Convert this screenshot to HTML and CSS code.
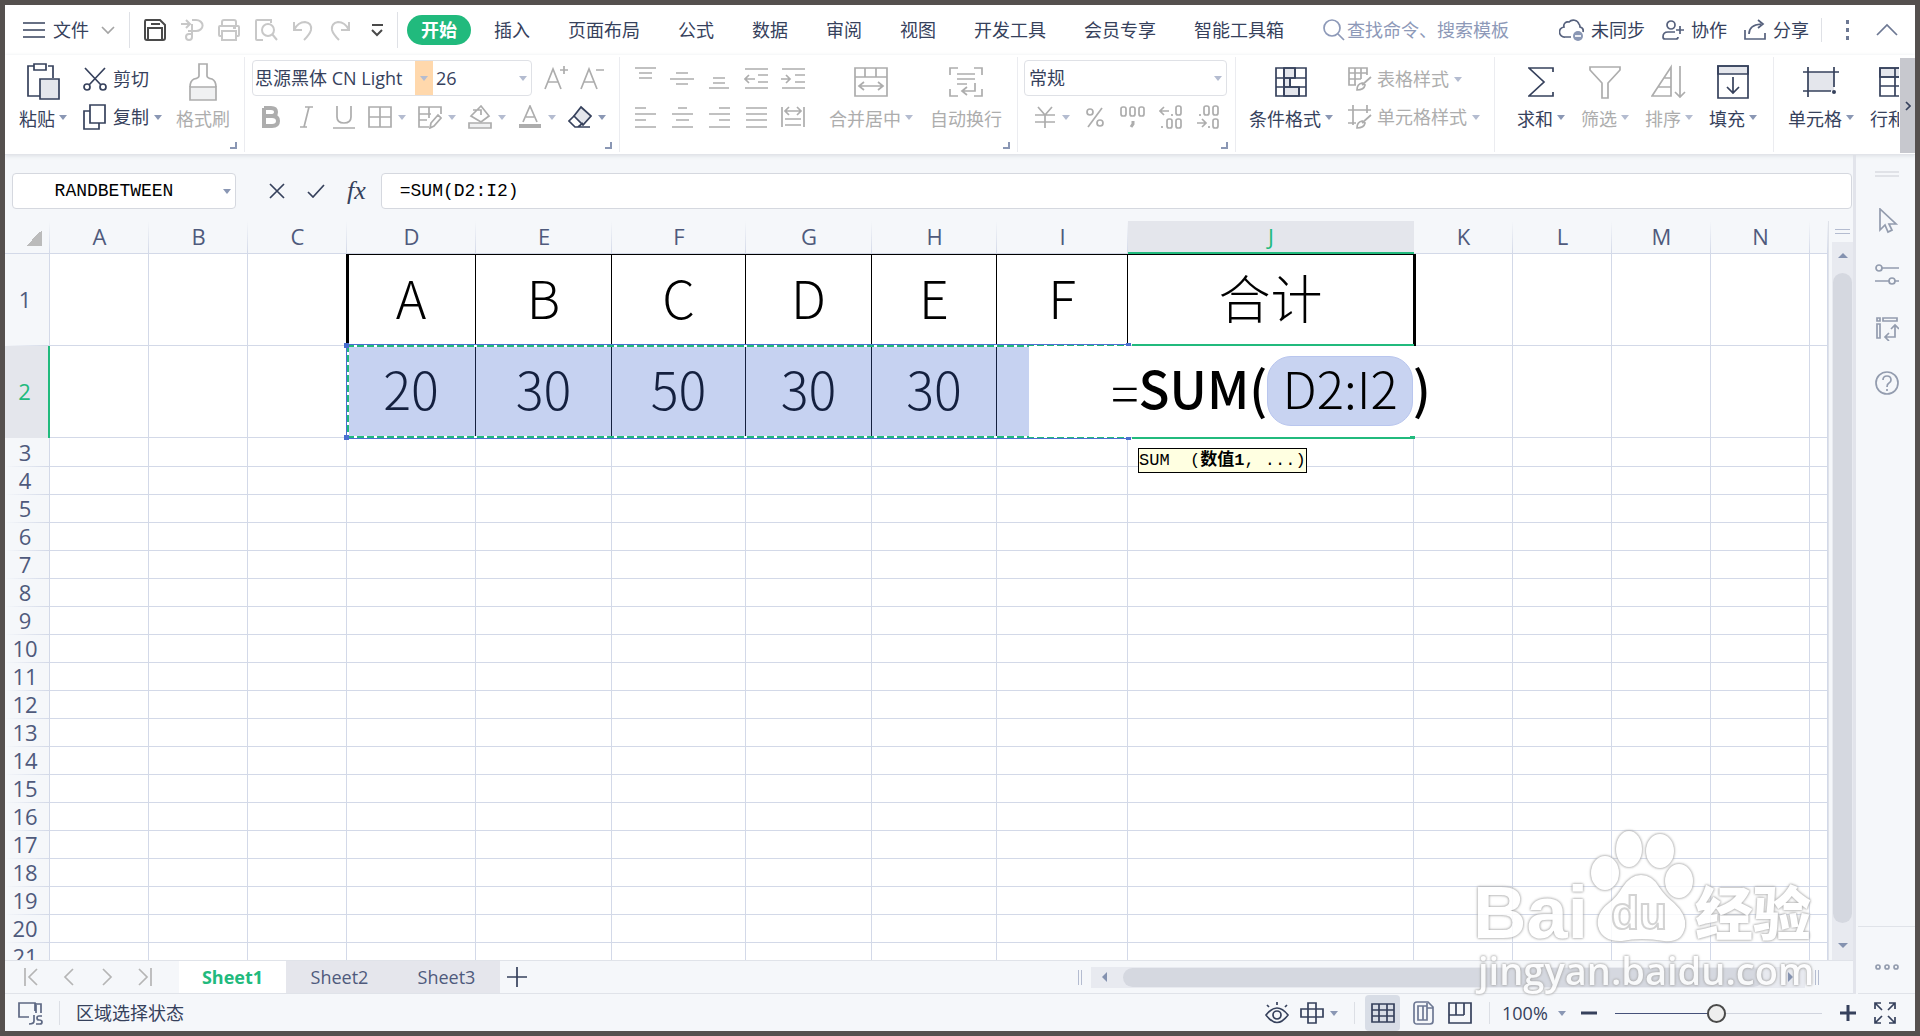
FILE: index.html
```html
<!DOCTYPE html>
<html lang="zh-CN">
  <head>
    <meta charset="utf-8">
    <title>Sheet1</title>
    <link rel="stylesheet" href="styles.css">
  </head>
  <body>
    <header class="menu">
      <button class="file-btn">
        <svg width="22" height="20" viewBox="0 0 22 20"><path d="M0 3h22M0 10h22M0 17h22"/></svg>
        <span>文件</span>
        <svg class="grey" width="14" height="10" viewBox="0 0 14 10"><path d="M1 2l6 6 6-6"/></svg>
      </button>
      <div class="quick">
        <button aria-label="保存"><svg class="black" width="24" height="24" viewBox="0 0 24 24"><path d="M3 2h14l5 5v13q0 2-2 2H4q-2 0-2-2V4q0-2 1-2zM5 22V10h14v12M8 6h9" stroke-width="2"/></svg></button>
        <button aria-label="输出为PDF"><svg class="faint" width="24" height="24" viewBox="0 0 24 24"><path d="M1 6h8M6 2l4 4-4 4M12 2h4a6 5 0 0 1 0 11H8M12 6v13a3 3 0 1 1-3-3h4" stroke-width="2"/></svg></button>
        <button aria-label="打印"><svg class="faint" width="24" height="24" viewBox="0 0 24 24"><path d="M5 8V4q0-2 2-2h10q2 0 2 2v4M5 18H3q-1 0-1-1V9q0-1 1-1h18q1 0 1 1v8q0 1-1 1h-2M5 13h14v9H5zM16 10h3" stroke-width="2"/></svg></button>
        <button aria-label="打印预览"><svg class="faint" width="24" height="24" viewBox="0 0 24 24"><path d="M9 22H3q-1 0-1-1V3q0-1 1-1h15M18 16l5 6M17 2v3" stroke-width="2"/><circle cx="14" cy="12" r="6" stroke-width="2"/></svg></button>
        <button aria-label="撤销"><svg class="faint" width="24" height="24" viewBox="0 0 24 24"><path d="M3 4v8h8M3 12q4-8 11-8 7 1 6 8-1 4-7 10" stroke-width="2"/></svg></button>
        <button aria-label="恢复"><svg class="faint" width="24" height="24" viewBox="0 0 24 24"><path d="M21 4v8h-8M21 12q-4-8-11-8-7 1-6 8 1 4 7 10" stroke-width="2"/></svg></button>
        <button aria-label="更多"><svg class="black" width="24" height="24" viewBox="0 0 24 24"><path d="M7 7h11M7 12l5 5 5-5" stroke-width="2"/></svg></button>
      </div>
      <nav class="tabs">
        <a class="active" href="#">开始</a>
        <a href="#">插入</a>
        <a href="#">页面布局</a>
        <a href="#">公式</a>
        <a href="#">数据</a>
        <a href="#">审阅</a>
        <a href="#">视图</a>
        <a href="#">开发工具</a>
        <a href="#">会员专享</a>
        <a href="#">智能工具箱</a>
      </nav>
      <label class="search">
        <svg width="22" height="22" viewBox="0 0 22 22"><circle cx="9" cy="9" r="8"/><path d="M15 15l6 6"/></svg>
        <input type="text" placeholder="查找命令、搜索模板" aria-label="查找命令、搜索模板">
      </label>
      <div class="account">
        <button><svg width="26" height="24" viewBox="0 0 26 24"><path d="M12 19H6a5 5 0 0 1-1-10 4 4 0 0 1 5-5 6 6 0 0 1 10 2q1 1 1 3 4 1 3 5"/><circle class="dot" cx="19" cy="18" r="5"/><path class="dash" d="M16 18h6"/></svg>未同步</button>
        <button><svg width="24" height="24" viewBox="0 0 24 24"><circle cx="10" cy="7" r="4"/><path d="M14 14H7q-5 0-5 5 0 2 2 2h11q2 0 2-2M19 8v8M15 12h8"/></svg>协作</button>
        <button><svg width="24" height="24" viewBox="0 0 24 24"><path d="M2 12v9h20v-6M6 16q0-9 12-10M15 2l5 4-5 4"/></svg>分享</button>
      </div>
      <button class="more" aria-label="更多"><svg width="4" height="20" viewBox="0 0 4 20"><path class="solid" d="M0 0h3v4H0zM0 8h3v4H0zM0 16h3v4H0z"/></svg></button>
      <button class="fold" aria-label="收起功能区"><svg width="22" height="14" viewBox="0 0 22 14"><path d="M1 12L11 2l10 10"/></svg></button>
    </header>

    <section class="ribbon">
      <div class="group clipboard">
        <button class="big">
          <svg width="34" height="38" viewBox="0 0 34 38"><path d="M8 3H2v30h12M22 3h5v12M8 1h12v6H8z"/><path class="tint" d="M14 16h19v20H14z"/></svg>
          <span>粘贴<i class="caret"></i></span>
        </button>
        <div class="stack">
          <button class="small"><svg width="26" height="24" viewBox="0 0 26 24"><path d="M3 1l16 17M23 1L7 18"/><circle cx="5" cy="20" r="3"/><circle cx="21" cy="20" r="3"/></svg>剪切</button>
          <button class="small"><svg width="26" height="26" viewBox="0 0 26 26"><path d="M8 1h15v18H8zM8 7H2v18h15v-6"/></svg>复制<i class="caret"></i></button>
        </div>
        <button class="big off">
          <svg width="30" height="38" viewBox="0 0 30 38"><path class="tint" d="M2 24h26v13H2z"/><path d="M2 24q0-6 4-8 5-1 5-3V1h8v12q0 2 5 3 4 2 4 8"/></svg>
          <span>格式刷</span>
        </button>
        <i class="corner"></i>
      </div>

      <div class="group font">
        <div class="stack">
          <div class="line">
            <div class="combo">
              <select class="font-name" aria-label="字体"><option>思源黑体 CN Light</option></select>
              <i class="hot"><i class="caret"></i></i>
              <select class="font-size" aria-label="字号"><option>26</option></select>
              <i class="caret"></i>
            </div>
            <button class="off" aria-label="增大字号"><svg width="24" height="24" viewBox="0 0 24 24"><path d="M1 23L9 3l8 20M4 16h10M16 4h8M20 0v8"/></svg></button>
            <button class="off" aria-label="减小字号"><svg width="24" height="24" viewBox="0 0 24 24"><path d="M1 23L9 3l8 20M4 16h10M16 4h8"/></svg></button>
          </div>
          <div class="line tools">
            <button class="off" aria-label="加粗"><svg width="24" height="24" viewBox="0 0 24 24"><path d="M4 3v18h8q6 0 6-5t-6-5H4M4 3h7q5 0 5 4t-5 4" stroke-width="4"/></svg></button>
            <button class="off" aria-label="倾斜"><svg width="24" height="24" viewBox="0 0 24 24"><path d="M9 2h8M4 22h7M13 2L8 22"/></svg></button>
            <button class="off" aria-label="下划线"><svg width="24" height="24" viewBox="0 0 24 24"><path d="M5 1v11q0 6 7 6t7-6V1M1 23h22"/></svg></button>
            <button class="off" aria-label="边框"><svg width="24" height="24" viewBox="0 0 24 24"><path d="M1 2h22v20H1zM12 2v20M1 12h22"/></svg><i class="caret"></i></button>
            <button class="off" aria-label="绘制边框"><svg width="24" height="24" viewBox="0 0 24 24"><path d="M23 9V2H1v20h10M1 9h12M11 2v11M1 15h8M13 18l7-8 3 3-7 8-4 2z"/></svg><i class="caret"></i></button>
            <button class="off" aria-label="填充颜色"><svg width="24" height="24" viewBox="0 0 24 24"><path d="M5 5h8v5M13 1L3 11l10 6 8-6z"/><path class="tint" d="M1 18h22v5H1z"/></svg><i class="caret"></i></button>
            <button class="off" aria-label="字体颜色"><svg width="24" height="24" viewBox="0 0 24 24"><path d="M5 17L12 1l7 16M8 12h8"/><path class="solid" d="M1 19h22v4H1z"/></svg><i class="caret"></i></button>
            <button aria-label="清除"><svg width="24" height="24" viewBox="0 0 24 24"><path class="tint" d="M13 2l10 9-8 9-9-9z"/><path d="M6 11l-5 5 6 6h15M10 22l5-4"/></svg><i class="caret"></i></button>
          </div>
        </div>
        <i class="corner"></i>
      </div>

      <div class="group align">
        <div class="stack">
          <div class="line wide">
            <button class="off" aria-label="顶端对齐"><svg width="24" height="24" viewBox="0 0 24 24"><path d="M2 1h21M6 6h13M6 11h13"/></svg></button>
            <button class="off" aria-label="垂直居中"><svg width="24" height="24" viewBox="0 0 24 24"><path d="M6 6h12M0 12h24M6 17h12"/></svg></button>
            <button class="off" aria-label="底端对齐"><svg width="24" height="24" viewBox="0 0 24 24"><path d="M6 11h12M6 16h12M2 21h20"/></svg></button>
            <button class="off" aria-label="减少缩进"><svg width="24" height="24" viewBox="0 0 24 24"><path d="M1 2h23M14 8h10M14 15h10M1 21h23M1 12h10M5 8l-4 4 4 4"/></svg></button>
            <button class="off" aria-label="增加缩进"><svg width="24" height="24" viewBox="0 0 24 24"><path d="M1 2h23M14 8h10M14 15h10M1 21h23M0 12h9M5 8l4 4-4 4"/></svg></button>
          </div>
          <div class="line wide">
            <button class="off" aria-label="左对齐"><svg width="24" height="24" viewBox="0 0 24 24"><path d="M2 3h11M2 9h21M2 15h11M2 22h21"/></svg></button>
            <button class="off" aria-label="水平居中"><svg width="24" height="24" viewBox="0 0 24 24"><path d="M8 3h9M2 9h21M6 15h13M2 22h21"/></svg></button>
            <button class="off" aria-label="右对齐"><svg width="24" height="24" viewBox="0 0 24 24"><path d="M12 3h11M2 9h21M12 15h11M2 22h21"/></svg></button>
            <button class="off" aria-label="两端对齐"><svg width="24" height="24" viewBox="0 0 24 24"><path d="M2 3h21M2 9h21M2 15h21M2 22h21"/></svg></button>
            <button class="off" aria-label="分散对齐"><svg width="24" height="24" viewBox="0 0 24 24"><path d="M1 2v20M23 2v20M4 14h16M4 20h16M4 6h16M8 2L4 6l4 4M16 2l4 4-4 4"/></svg></button>
          </div>
        </div>
        <button class="big off">
          <svg width="34" height="30" viewBox="0 0 34 30"><path d="M1 1h32v28H1zM1 10h32M11 1v9M22 1v9M6 19h22M10 15l-5 4 5 4M24 15l5 4-5 4"/></svg>
          <span>合并居中<i class="caret"></i></span>
        </button>
        <button class="big off">
          <svg width="34" height="30" viewBox="0 0 34 30"><path d="M1 8V1h8M25 1h8v7M1 22v7h8M25 29h8v-7M8 7h18M8 12h18M8 17h10M26 16v8H13M18 20l-5 4 5 4"/></svg>
          <span>自动换行</span>
        </button>
        <i class="corner"></i>
      </div>

      <div class="group number">
        <div class="stack">
          <div class="combo">
            <select class="format" aria-label="数字格式"><option>常规</option></select>
            <i class="caret"></i>
          </div>
          <div class="line wide">
            <button class="off" aria-label="货币"><svg width="22" height="24" viewBox="0 0 22 24"><path d="M4 2l7 8 7-8M1 10h20M1 17h20M11 10v13"/></svg><i class="caret"></i></button>
            <button class="off" aria-label="百分比"><svg width="24" height="24" viewBox="0 0 24 24"><circle cx="7" cy="7" r="3"/><circle cx="17" cy="18" r="3"/><path d="M19 3L5 22"/></svg></button>
            <button class="off" aria-label="千位分隔"><svg width="26" height="24" viewBox="0 0 26 24"><rect x="1" y="2" width="5" height="9" rx="2"/><rect x="10" y="2" width="5" height="9" rx="2"/><rect x="19" y="2" width="5" height="9" rx="2"/><path d="M13 16v3l-2 3" stroke-width="3"/></svg></button>
            <button class="off" aria-label="增加小数位"><svg width="24" height="24" viewBox="0 0 24 24"><path d="M1 6h9M5 2L1 6l4 4M13 9v2M3 21v2"/><rect x="17" y="1" width="5" height="9" rx="2"/><rect x="8" y="14" width="5" height="9" rx="2"/><rect x="17" y="14" width="5" height="9" rx="2"/></svg></button>
            <button class="off" aria-label="减少小数位"><svg width="24" height="24" viewBox="0 0 24 24"><path d="M1 18h9M6 14l4 4-4 4M13 21v2M4 9v2"/><rect x="8" y="1" width="5" height="9" rx="2"/><rect x="17" y="1" width="5" height="9" rx="2"/><rect x="17" y="14" width="5" height="9" rx="2"/></svg></button>
          </div>
        </div>
        <i class="corner"></i>
      </div>

      <div class="group style">
        <button class="big">
          <svg width="32" height="30" viewBox="0 0 32 30"><path class="tint" d="M9 1h11v10H9zM9 11h6v9H9zM9 20h15v9H9z"/><path d="M1 1h30v28H1zM1 11h30M1 20h30M9 1v28M20 1v10M15 11v9M24 20v9"/></svg>
          <span>条件格式<i class="caret"></i></span>
        </button>
        <div class="stack">
          <button class="small off"><svg width="24" height="24" viewBox="0 0 24 24"><path d="M8 18H1V1h18v7M1 6h18M1 12h12M7 1v17M13 1v11M23 10l-9 8M14 16q-5 1-5 7 7 0 8-5z"/></svg>表格样式<i class="caret"></i></button>
          <button class="small off"><svg width="24" height="24" viewBox="0 0 24 24"><path d="M5 0v20M0 5h23M19 0v8M0 18h8M23 10l-9 8M14 16q-5 1-5 7 7 0 8-5z"/></svg>单元格样式<i class="caret"></i></button>
        </div>
      </div>

      <div class="group edit">
        <button class="big">
          <svg width="26" height="32" viewBox="0 0 26 32"><path d="M25 6V2H1l15 14L1 30h24v-4"/></svg>
          <span>求和<i class="caret"></i></span>
        </button>
        <button class="big off">
          <svg width="32" height="34" viewBox="0 0 32 34"><path d="M1 2h30v3L19 18v15h-6V18L1 5z"/></svg>
          <span>筛选<i class="caret"></i></span>
        </button>
        <button class="big off">
          <svg width="36" height="34" viewBox="0 0 36 34"><path d="M20 2v29H1zM13 13h7M7 22h13M29 1v31M24 27l5 5 5-5"/></svg>
          <span>排序<i class="caret"></i></span>
        </button>
        <button class="big">
          <svg width="32" height="34" viewBox="0 0 32 34"><path class="tint" d="M1 1h30v8H1z"/><path d="M1 1h30v32H1zM16 12v16M10 22l6 6 6-6"/></svg>
          <span>填充<i class="caret"></i></span>
        </button>
      </div>

      <div class="group cells">
        <button class="big">
          <svg width="36" height="30" viewBox="0 0 36 30"><path class="tint" d="M5 5h26v19H5z" stroke="none"/><path d="M5 0v30M0 5h36M31 0v20M0 24h28"/><circle class="solid" cx="31" cy="25" r="2"/></svg>
          <span>单元格<i class="caret"></i></span>
        </button>
        <button class="big">
          <svg width="48" height="30" viewBox="0 0 48 30"><path class="tint" d="M1 1h46v9H1z"/><path d="M1 1h46v28H1zM1 10h46M1 19h46M16 1v28M32 1v28"/></svg>
          <span>行和列<i class="caret"></i></span>
        </button>
      </div>
      <button class="ribbon-next" aria-label="向右滚动"><svg width="6" height="10" viewBox="0 0 6 10"><path d="M1 1l4 4-4 4"/></svg></button>
    </section>

    <div class="work">
      <main class="main">
        <div class="formula-bar">
          <div class="name-box"><input type="text" value="RANDBETWEEN" aria-label="名称框"><i class="caret"></i></div>
          <div class="formula-btns">
            <button aria-label="取消"><svg width="16" height="16" viewBox="0 0 16 16"><path d="M1 1l14 14M15 1L1 15"/></svg></button>
            <button aria-label="输入"><svg width="18" height="14" viewBox="0 0 18 14"><path d="M1 8l5 5L17 1"/></svg></button>
            <button class="fx" aria-label="插入函数">fx</button>
          </div>
          <input class="formula" type="text" value="=SUM(D2:I2)" aria-label="编辑栏">
        </div>

        <div class="grid-area">
          <div class="grid">
            <table class="sheet">
              <colgroup>
                <col class="c-head"><col class="c-std"><col class="c-std"><col class="c-std">
                <col class="c-d"><col class="c-e"><col class="c-f"><col class="c-g"><col class="c-h"><col class="c-i"><col class="c-j">
                <col class="c-std"><col class="c-std"><col class="c-std"><col class="c-std"><col>
              </colgroup>
              <thead>
                <tr>
                  <th class="all"></th>
                  <th>A</th><th>B</th><th>C</th><th>D</th><th>E</th><th>F</th><th>G</th><th>H</th><th>I</th>
                  <th class="on">J</th><th>K</th><th>L</th><th>M</th><th>N</th><th></th>
                </tr>
              </thead>
              <tbody id="rows">
                <tr class="tall first">
                  <th>1</th><td></td><td></td><td></td>
                  <td class="box lead">A</td><td class="box">B</td><td class="box">C</td><td class="box">D</td><td class="box">E</td><td class="box">F</td>
                  <td class="box last">合计</td><td></td><td></td><td></td><td></td><td></td>
                </tr>
                <tr class="tall">
                  <th class="on">2</th><td></td><td></td><td></td>
                  <td class="box start">20<div class="range"></div></td>
                  <td class="box">30</td><td class="box">50</td><td class="box">30</td><td class="box">30</td><td></td>
                  <td class="start">
                    <div class="editor">=<b>SUM(</b><span class="ref">D2:I2</span><b>)</b></div>
                    <div class="active-cell"></div>
                    <div class="hint">SUM&nbsp;&nbsp;(<b>数值1</b>, ...)</div>
                  </td>
                  <td></td><td></td><td></td><td></td><td></td>
                </tr>
              </tbody>
            </table>
          </div>
          <div class="vscroll">
            <i class="split"></i>
            <div class="vtrack">
              <i class="arrow up"></i>
              <div class="vthumb"></div>
              <i class="arrow down"></i>
            </div>
          </div>
        </div>

        <div class="sheet-bar">
          <div class="sheet-nav">
            <button aria-label="第一张"><svg width="14" height="18" viewBox="0 0 14 18"><path d="M1 0v18M13 1L5 9l8 8"/></svg></button>
            <button aria-label="上一张"><svg width="14" height="18" viewBox="0 0 14 18"><path d="M11 1L3 9l8 8"/></svg></button>
            <button aria-label="下一张"><svg width="14" height="18" viewBox="0 0 14 18"><path d="M3 1l8 8-8 8"/></svg></button>
            <button aria-label="最后一张"><svg width="14" height="18" viewBox="0 0 14 18"><path d="M13 0v18M1 1l8 8-8 8"/></svg></button>
          </div>
          <a class="sheet-tab on" href="#">Sheet1</a>
          <a class="sheet-tab" href="#">Sheet2</a>
          <a class="sheet-tab" href="#">Sheet3</a>
          <button class="add" aria-label="新建工作表"><svg width="20" height="20" viewBox="0 0 20 20"><path d="M10 0v20M0 10h20"/></svg></button>
          <i class="grip"></i>
          <div class="hscroll">
            <i class="arrow left"></i>
            <div class="hthumb"></div>
            <i class="arrow right"></i>
          </div>
          <i class="grip end"></i>
        </div>
      </main>

      <aside class="side">
        <i class="handle"></i>
        <button aria-label="选择"><svg width="24" height="26" viewBox="0 0 24 26"><path d="M5 1v21l5-5 3 7 4-2-3-6h7z"/></svg></button>
        <button aria-label="属性"><svg width="24" height="24" viewBox="0 0 24 24"><circle cx="4" cy="5" r="3"/><path d="M7 5h17M0 18h14M20 18h4"/><circle cx="17" cy="18" r="3"/></svg></button>
        <button aria-label="分析"><svg width="24" height="24" viewBox="0 0 24 24"><path d="M2 1h3v3H2zM8 1h14v3H8zM2 7h3v14H2zM20 9v11H10M16 12l4-4 4 4M14 16l-4 4 4 4"/></svg></button>
        <button aria-label="帮助"><svg width="24" height="24" viewBox="0 0 24 24"><circle cx="12" cy="12" r="11"/><path d="M8 9q0-4 4-4t4 4q0 2-2 3t-2 4M12 18v2"/></svg></button>
        <button class="dots" aria-label="更多"><svg width="26" height="8" viewBox="0 0 26 8"><circle cx="4" cy="4" r="2"/><circle cx="13" cy="4" r="2"/><circle cx="22" cy="4" r="2"/></svg></button>
      </aside>
    </div>

    <footer class="status">
      <button class="macro" aria-label="JS宏"><svg width="26" height="24" viewBox="0 0 26 24"><path d="M11 16H1V2h16v8M18 12V2M19 3h4v9M16 14v6q0 3-5 3M24 15h-3q-2 0-2 2t2 2q3 0 3 2t-2 2h-4"/></svg></button>
      <span class="state">区域选择状态</span>
      <button class="eye" aria-label="护眼模式"><svg width="24" height="24" viewBox="0 0 24 24"><path d="M1 14q11-14 22 0-11 15-22 0zM12 1v3M2 4l2 2M22 4l-2 2"/><circle cx="12" cy="14" r="4"/></svg></button>
      <button class="cross" aria-label="阅读模式"><svg width="24" height="22" viewBox="0 0 24 22"><path d="M8 1h8v20H8zM1 7h22v8H1z"/></svg><i class="caret"></i></button>
      <div class="views">
        <button class="on" aria-label="普通视图"><svg width="24" height="20" viewBox="0 0 24 20"><path d="M1 1h22v18H1zM1 7h22M1 13h22M8 1v18M16 1v18"/></svg></button>
        <button aria-label="分页预览"><svg class="mid" width="22" height="24" viewBox="0 0 22 24"><path d="M4 1h11l5 5v14q0 3-3 3H4q-3 0-3-3V4q0-3 3-3zM5 5h9v14H5zM10 5v14M14 2v5h6"/></svg></button>
        <button aria-label="页面布局"><svg width="24" height="22" viewBox="0 0 24 22"><path d="M1 1h22v20H1zM8 1v12M16 1v12M1 13h15"/></svg></button>
      </div>
      <select class="zoom-pct" aria-label="显示比例"><option>100%</option></select>
      <i class="caret"></i>
      <button class="zoom-out" aria-label="缩小"><svg width="16" height="4" viewBox="0 0 16 4"><path d="M0 2h16" stroke-width="3"/></svg></button>
      <input class="zoom" type="range" min="0" max="100" value="49" aria-label="缩放">
      <button class="zoom-in" aria-label="放大"><svg width="16" height="16" viewBox="0 0 16 16"><path d="M0 8h16M8 0v16" stroke-width="3"/></svg></button>
      <button aria-label="全屏"><svg width="22" height="22" viewBox="0 0 22 22"><path d="M1 7V1h6M1 1l7 7M15 1h6v6M21 1l-7 7M1 15v6h6M1 21l7-7M21 15v6h-6M21 21l-7-7"/></svg></button>
    </footer>

    <svg class="watermark" width="360" height="174" viewBox="0 0 360 174" role="img" aria-label="Baidu 经验">
      <g class="paw">
        <ellipse cx="145" cy="53" rx="14" ry="17"/>
        <ellipse cx="169" cy="29" rx="13" ry="18"/>
        <ellipse cx="200" cy="31" rx="14" ry="17"/>
        <ellipse cx="219" cy="61" rx="14" ry="17"/>
        <path d="M181 55q11 0 18 12 6 9 15 16 13 12 11 24-3 16-21 14-23-4-42 0-20 1-24-15-2-13 11-23 8-6 13-15 8-13 19-13z"/>
      </g>
      <text class="brand" x="13" y="118">Bai</text>
      <text class="du" x="151" y="109">du</text>
      <text class="cjk" x="235" y="115">经验</text>
      <text class="site" x="18" y="165">jingyan.baidu.com</text>
    </svg>
    <script src="script.js"></script>
  </body>
</html>
```
FILE: styles.css
```css
* {
  box-sizing: border-box;
}

body {
  margin: 0;
  height: 100vh;
  display: flex;
  flex-direction: column;
  border: 5px solid #55504e;
  overflow: hidden;
  background: #f5f7fa;
  color: #36415c;
  font: 18px/24px "Open Sans", "Noto Sans CJK SC", sans-serif;
}

button,
input,
select {
  margin: 0;
  padding: 0;
  border: 0;
  background: none;
  color: inherit;
  font: inherit;
  outline: 0;
}

button {
  display: flex;
  align-items: center;
  justify-content: center;
  flex: none;
}

select {
  appearance: none;
}

a {
  color: inherit;
  text-decoration: none;
}

svg {
  flex: none;
  fill: none;
  stroke: currentColor;
  stroke-width: 1.7;
}

.grey {
  color: #a5a5a5;
}

.faint {
  color: #c8c8c8;
}

.black {
  color: #4a4a4a;
}

.tint {
  fill: #e4e6ec;
}

.solid {
  fill: currentColor;
  stroke: none;
}

.caret {
  flex: none;
  width: 8px;
  border: 4px solid transparent;
  border-top: 5px solid #8a97b4;
  border-bottom: 0;
}

/* menu */
.menu {
  flex: none;
  height: 50px;
  display: flex;
  align-items: center;
  padding: 0 17px 1px 18px;
  background: #fff;
}

.file-btn {
  padding-right: 14px;
  gap: 8px;
}

.file-btn .grey {
  margin-left: 4px;
}

.quick {
  display: flex;
  gap: 13px;
  height: 36px;
  padding: 0 8px 0 13px;
  border: solid #dfe1e6;
  border-width: 0 1px;
}

.tabs {
  display: flex;
  margin-left: 9px;
  white-space: nowrap;
}

.tabs a {
  padding: 3px 19px;
}

.tabs .active {
  margin-right: 4px;
  padding: 3px 14px;
  border-radius: 15px;
  background: #21ba7d;
  color: #fff;
  font-weight: 700;
}

.search {
  display: flex;
  align-items: center;
  gap: 2px;
  margin-left: 20px;
  color: #8d99b8;
}

.search input {
  width: 180px;
}

.search input::placeholder {
  color: inherit;
  opacity: 1;
}

.account {
  display: flex;
  gap: 16px;
  margin-left: auto;
  padding-right: 12px;
  border-right: 1px solid #dfe1e6;
}

.account button {
  gap: 6px;
}

.account svg {
  color: #56617d;
}

.account .dot {
  fill: #8a97b4;
  stroke: none;
}

.account .dash {
  stroke: #fff;
}

.more {
  margin: 0 26px 0 24px;
  color: #6d7893;
}

.fold {
  color: #6d7893;
}

/* ribbon */
.ribbon {
  flex: none;
  height: 100px;
  display: flex;
  align-items: flex-start;
  padding-top: 2px;
  background: #fff;
  border-bottom: 1px solid #e2e4e9;
  box-shadow: 0 1px 4px #dcdfe5;
  position: relative;
  white-space: nowrap;
}

.group {
  flex: none;
  display: flex;
  height: 95px;
  position: relative;
  border-right: 1px solid #ebecf0;
}

.corner {
  position: absolute;
  right: 7px;
  bottom: 3px;
  width: 7px;
  height: 7px;
  border: solid #8a97b4;
  border-width: 0 2px 2px 0;
}

.big {
  flex-direction: column;
  justify-content: flex-start;
  padding-top: 5px;
  gap: 5px;
}

.big svg {
  height: 40px;
}

.big span,
.small {
  display: flex;
  align-items: center;
}

.big .caret {
  margin: 0 0 4px 4px;
}

.small {
  height: 24px;
  gap: 5px;
  justify-content: flex-start;
}

.off {
  color: #adadad;
}

.off .tint {
  fill: #f0f1f2;
}

.off .caret,
.combo .caret {
  border-top-color: #b4bcd0;
}

.stack {
  display: flex;
  flex-direction: column;
  gap: 14px;
  padding-top: 10px;
}

.line {
  display: flex;
  align-items: center;
  gap: 12px;
}

.line button {
  gap: 6px;
  height: 24px;
}

.wide {
  gap: 13px;
}

.combo {
  display: flex;
  align-items: center;
  height: 36px;
  border: 1px solid #dfe1e6;
  border-radius: 4px;
}

.combo > .caret {
  margin-right: 4px;
}

.clipboard {
  padding: 0 14px;
}

.clipboard .stack {
  margin: 0 14px 0 15px;
}

.font {
  padding: 0 13px 0 7px;
}

.font .stack,
.number .stack {
  gap: 9px;
  padding-top: 3px;
}

.tools {
  padding-left: 8px;
}

.font-name {
  width: 162px;
  padding-left: 2px;
}

.hot {
  display: flex;
  align-items: center;
  justify-content: center;
  width: 18px;
  height: 34px;
  background: #ffd8ac;
}

.font-size {
  width: 86px;
  padding-left: 3px;
}

.align {
  padding: 0 15px 0 13px;
}

.align .stack {
  margin-right: 24px;
}

.align .off + .big {
  margin-left: 17px;
}

.number {
  padding: 0 8px 0 6px;
}

.number .wide {
  padding-left: 10px;
}

.format {
  width: 189px;
  padding-left: 4px;
}

.style {
  gap: 15px;
  padding: 0 14px 0 13px;
}

.edit {
  gap: 16px;
  padding: 0 16px 0 22px;
}

.cells {
  flex: 1 1 0;
  min-width: 0;
  gap: 16px;
  padding-left: 14px;
  margin-right: 16px;
  border-right: 0;
  overflow: hidden;
}

.ribbon-next {
  position: absolute;
  top: 3px;
  right: 0;
  width: 15px;
  height: 95px;
  background: #c7c8ce;
}

/* work area */
.work {
  flex: 1;
  min-height: 0;
  display: flex;
}

.main {
  flex: 1;
  min-width: 0;
  display: flex;
  flex-direction: column;
}

.formula-bar {
  flex: none;
  height: 66px;
  display: flex;
  align-items: center;
  padding: 6px 1px 0 7px;
}

.name-box,
.formula {
  height: 36px;
  background: #fff;
  border: 1px solid #d5d8df;
  border-radius: 4px;
  color: #000;
  font: 18px/24px "Liberation Mono", "Noto Sans CJK SC", monospace;
}

.name-box {
  display: flex;
  align-items: center;
  width: 224px;
  padding-right: 4px;
}

.name-box input {
  flex: 1;
  min-width: 0;
  padding-right: 8px;
  text-align: center;
}

.formula {
  flex: 1;
  min-width: 0;
  padding-left: 18px;
}

.formula-btns {
  display: flex;
  align-items: center;
  gap: 22px;
  padding: 0 15px 0 33px;
}

.fx {
  font: italic 26px/28px "Liberation Serif", serif;
}

.grid-area {
  flex: 1;
  min-height: 0;
  display: flex;
}

.grid {
  flex: 1;
  min-width: 0;
  overflow: hidden;
}

.sheet {
  width: 100%;
  table-layout: fixed;
  border-collapse: separate;
  border-spacing: 0;
}

.c-head { width: 45px; }
.c-std { width: 99px; }
.c-d { width: 129px; }
.c-e { width: 136px; }
.c-f { width: 134px; }
.c-g { width: 126px; }
.c-h { width: 125px; }
.c-i { width: 131px; }
.c-j { width: 286px; }

.sheet th,
.sheet td {
  height: 28px;
  padding: 0;
  border: solid #d3d9e8;
  border-width: 0 1px 1px 0;
  text-align: center;
  white-space: nowrap;
}

.sheet td {
  padding-bottom: 7px;
  background: #fff;
  color: #000;
  font: 300 52px/60px "Noto Sans CJK SC", sans-serif;
}

.sheet th {
  padding-bottom: 2px;
  color: #4f5a7c;
  font-size: 22px;
  line-height: 24px;
  font-weight: 400;
}

.sheet thead th {
  height: 33px;
  border-right: 0;
  background: linear-gradient(#f5f7fa, #d3d9e8) right / 1px 100% no-repeat;
}

.sheet tbody th {
  padding-right: 4px;
  border-bottom: 0;
  background: linear-gradient(90deg, #f5f7fa, #d3d9e8) bottom / 100% 1px no-repeat;
}

.sheet th.on {
  color: #21ba7d;
  background: #e4e6ec;
}

.sheet thead th.on {
  border-bottom: 2px solid #21ba7d;
}

.sheet tbody th.on {
  border-right: 2px solid #21ba7d;
}

.sheet th.all {
  background:
    linear-gradient(135deg, transparent 50%, #bbb 50%) 21px 9px / 16px 16px no-repeat,
    linear-gradient(#f5f7fa, #d3d9e8) right / 1px 100% no-repeat;
}

.sheet .tall td {
  height: 92px;
}

.sheet .row-3 td {
  height: 29px;
}

.sheet td.box {
  border-right-color: #000;
}

.sheet .first td.box {
  border-top: 1px solid #000;
}

.sheet td.lead {
  box-shadow: -1px 0 #000, inset 2px 0 #000;
}

.sheet td.last {
  box-shadow: 2px 0 #000;
  position: relative;
}

.sheet .start {
  position: relative;
}

/* marching border round D2:I2 */
.range {
  position: absolute;
  top: -2px;
  left: -1px;
  z-index: 1;
  width: 782px;
  height: 95px;
  border: 1px solid #4a6fd0;
  background:
    repeating-linear-gradient(90deg, #21ba7d 0 7px, #fff 7px 10px) top / 100% 2px no-repeat,
    repeating-linear-gradient(90deg, #21ba7d 0 7px, #fff 7px 10px) bottom / 100% 2px no-repeat,
    repeating-linear-gradient(#21ba7d 0 7px, #fff 7px 10px) left / 2px 100% no-repeat,
    rgba(65, 105, 210, 0.3);
}

.range::before {
  content: "";
  position: absolute;
  top: -2px;
  left: -3px;
  width: 5px;
  height: 5px;
  background: #4a6fd0;
  box-shadow: 0 92px #4a6fd0, 782px 0 #4a6fd0, 782px 92px #4a6fd0;
}

.editor {
  position: absolute;
  top: 0;
  left: -99px;
  z-index: 2;
  display: flex;
  align-items: center;
  justify-content: flex-end;
  height: 91px;
  width: 402px;
  padding-bottom: 1px;
  background: #fff;
  font-size: 51px;
}

.editor b {
  font-weight: 500;
}

.ref {
  padding: 0 14px 8px;
  border: 1px solid #b9c6ee;
  border-radius: 24px;
  background: #c8d3f1;
}

.editor b {
  padding-bottom: 8px;
}

.active-cell {
  position: absolute;
  top: -2px;
  left: 4px;
  right: -1px;
  z-index: 3;
  height: 95px;
  border: solid #21ba7d;
  border-width: 2px 0;
}

.active-cell::after {
  content: "";
  position: absolute;
  right: -1px;
  bottom: -2px;
  width: 5px;
  height: 3px;
  background: #21ba7d;
}

.hint {
  position: absolute;
  top: 102px;
  left: 10px;
  z-index: 3;
  border: 1px solid #000;
  background: #ffffe1;
  font: 17px/23px "Liberation Mono", "Noto Sans CJK SC", monospace;
}

.vscroll {
  flex: none;
  width: 25px;
  display: flex;
  flex-direction: column;
  padding-left: 3px;
  border-left: 1px solid #dfe2e9;
}

.split {
  height: 5px;
  margin: 8px 3px;
  border: solid #b4bcd0;
  border-width: 1px 0;
}

.vtrack {
  flex: 1;
  display: flex;
  flex-direction: column;
  align-items: center;
  background: #e8eaf0;
}

.arrow {
  flex: none;
  border: 5px solid transparent;
}

.up {
  margin: 6px 0 15px;
  border-bottom-color: #8492b0;
}

.down {
  margin: 20px 0 7px;
  border-top-color: #8492b0;
}

.vthumb {
  flex: 1;
  width: 19px;
  border-radius: 10px;
  background: #d5d8e0;
}

/* sheet tabs */
.sheet-bar {
  flex: none;
  height: 34px;
  display: flex;
  align-items: center;
  border: solid #e0e3e9;
  border-width: 1px 0;
}

.sheet-nav {
  display: flex;
  gap: 24px;
  padding: 0 27px 0 19px;
  color: #b5b5b5;
}

.sheet-tab {
  align-self: stretch;
  width: 107px;
  line-height: 32px;
  text-align: center;
  background: #e5e6ec;
  color: #4f5a7c;
}

.sheet-tab.on {
  background: #fff;
  color: #21ba7d;
  font-weight: 700;
}

.add {
  margin: 0 auto 0 7px;
}

.grip {
  width: 4px;
  height: 15px;
  border: solid #b4bcd0;
  border-width: 0 1px;
}

.grip.end {
  margin: 0 34px 0 10px;
}

.hscroll {
  flex: 0 0 714px;
  display: flex;
  align-items: center;
  height: 21px;
  margin-left: 9px;
  background: #e8eaf0;
}

.left {
  margin: 0 16px 0 6px;
  border-right-color: #8492b0;
}

.right {
  margin: 0 7px 0 auto;
  border-left-color: #8492b0;
}

.hthumb {
  width: 640px;
  height: 19px;
  border-radius: 10px;
  background: #d5d8e0;
}

/* right pane */
.side {
  flex: none;
  width: 62px;
  display: flex;
  flex-direction: column;
  align-items: center;
  gap: 30px;
  padding: 16px 0 0 2px;
  border-left: 3px solid #e2e4eb;
  color: #939cae;
}

.side button {
  height: 24px;
}

.handle {
  width: 24px;
  height: 6px;
  margin-bottom: 2px;
  border: solid #e0e2e7;
  border-width: 2px 0;
}

.side .dots {
  align-self: stretch;
  height: 68px;
  margin-top: auto;
  padding-top: 14px;
  border-top: 1px solid #e0e3e9;
  border-bottom: 1px solid #e0e3e9;
}

/* status bar */
.status {
  flex: none;
  height: 37px;
  display: flex;
  align-items: center;
  padding: 1px 19px 0 13px;
}

.macro {
  margin-right: 15px;
  color: #5d6883;
}

.state {
  padding-left: 16px;
  border-left: 1px solid #dcdfe5;
}

.eye {
  margin-left: auto;
}

.cross {
  gap: 6px;
  margin: 0 16px 0 11px;
}

.views {
  display: flex;
  align-items: center;
  gap: 13px;
  padding: 0 17px 0 10px;
  border: solid #dcdfe5;
  border-width: 0 1px;
  height: 22px;
}

.views button {
  height: 36px;
}

.views .on {
  width: 35px;
  border-radius: 4px;
  background: #d8dde6;
}

.mid {
  color: #6d7893;
}

.zoom-pct {
  width: 56px;
  margin-left: 12px;
}

.zoom-out {
  margin: 0 18px 0 15px;
}

.zoom {
  appearance: none;
  width: 207px;
  height: 20px;
  background: linear-gradient(90deg, #46527a 50%, #d0d4de 50%) center / 100% 1px no-repeat;
}

.zoom::-webkit-slider-thumb {
  appearance: none;
  width: 19px;
  height: 19px;
  border: 2px solid #4a4a4a;
  border-radius: 50%;
  background: #eee;
}

.zoom-in {
  margin: 0 18px;
}

.watermark {
  position: absolute;
  right: 100px;
  bottom: 42px;
  z-index: 5;
  pointer-events: none;
  filter: drop-shadow(0 0 1px #aaa) drop-shadow(0 0 1px #aaa);
  opacity: 0.85;
}

.watermark text,
.paw {
  fill: #fff;
  stroke: none;
}

.brand {
  font: bold 74px "Liberation Sans", sans-serif;
}

.watermark .du {
  font: bold 46px "Liberation Sans", sans-serif;
  stroke: #ccc;
  stroke-width: 2;
}

.cjk {
  font: 900 58px "Noto Sans CJK SC", sans-serif;
}

.site {
  font: 600 38px "Open Sans", sans-serif;
}
```
FILE: script.js
```js
// empty rows below the data
var body = document.querySelector('#rows');
for (var n = 3; n <= 21; n++) {
  var row = body.insertRow();
  row.className = 'row-' + n;
  var head = document.createElement('th');
  head.textContent = n;
  row.appendChild(head);
  for (var c = 0; c < 15; c++) {
    row.insertCell();
  }
}
```
